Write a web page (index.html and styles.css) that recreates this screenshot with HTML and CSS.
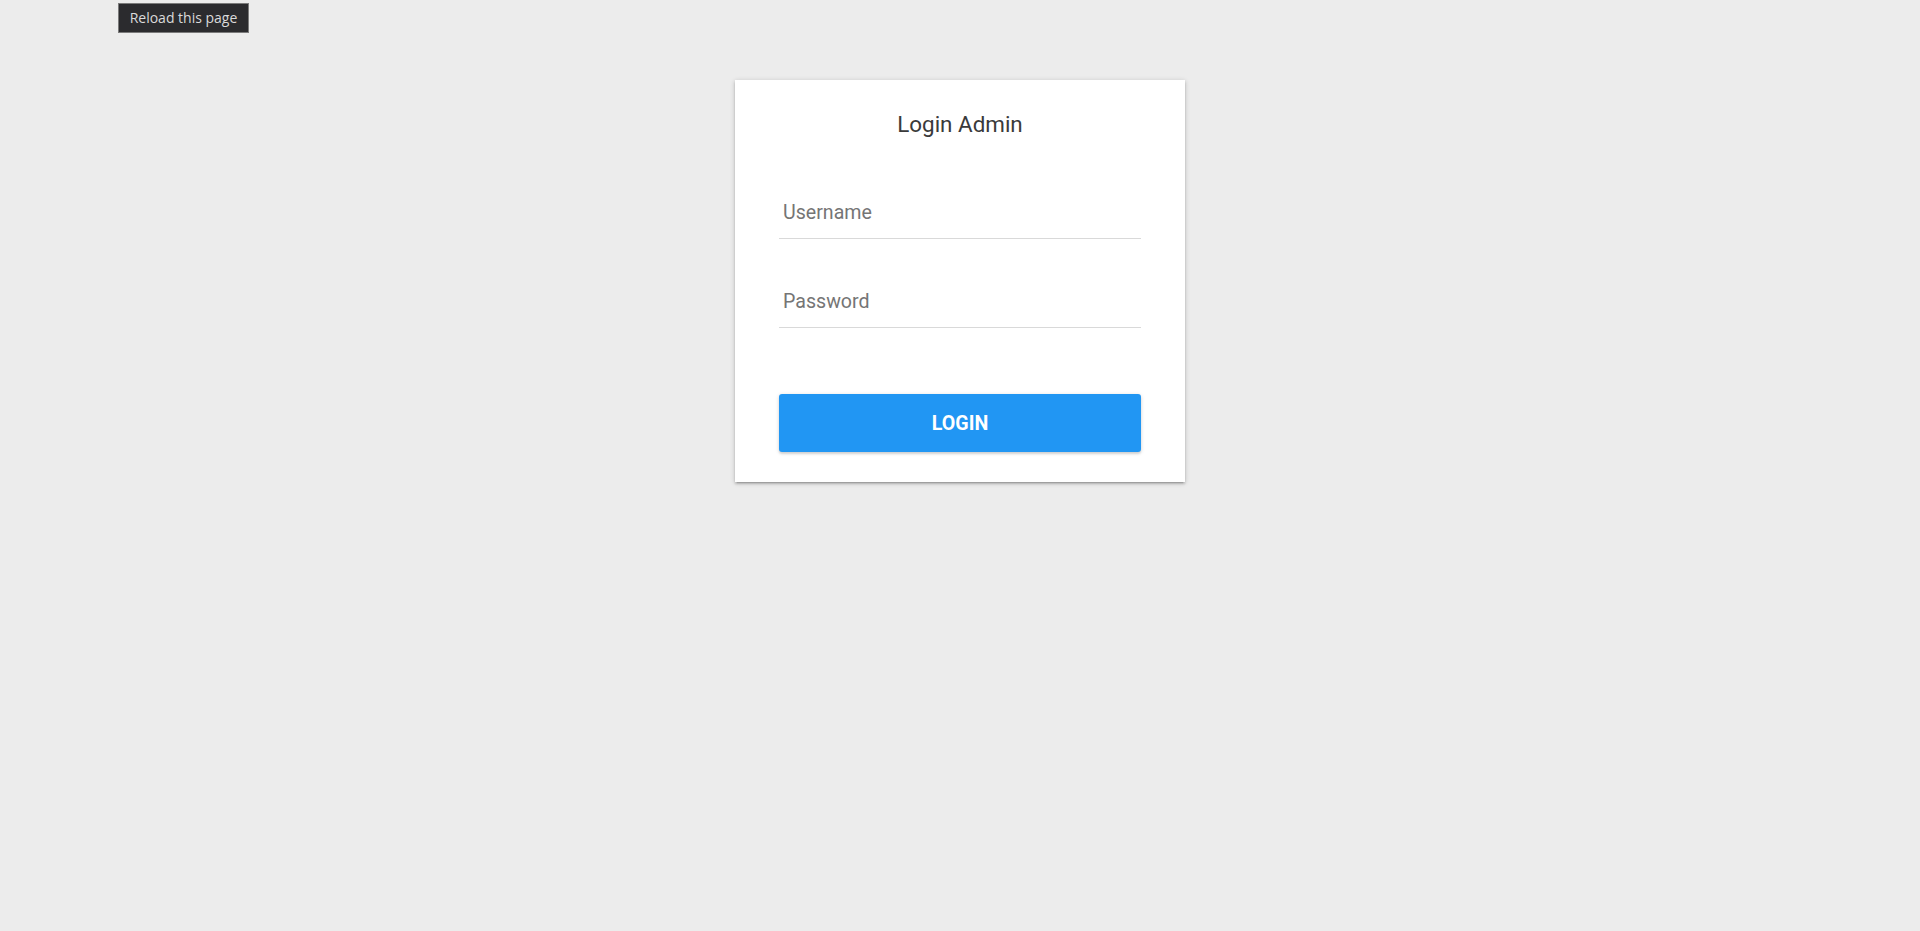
FILE: index.html
```html
<!DOCTYPE html>
<html lang="en">
<head>
<meta charset="utf-8">
<title>Login Admin</title>
<link rel="stylesheet" href="styles.css">
</head>
<body>
<div class="tooltip">Reload this page</div>
<main class="page">
  <form class="card">
    <h1 class="title">Login Admin</h1>
    <input class="field field-user" type="text" placeholder="Username">
    <input class="field field-pass" type="password" placeholder="Password">
    <button class="btn" type="button">Login</button>
  </form>
</main>
</body>
</html>
```
FILE: styles.css
```css
html, body {
  margin: 0;
  padding: 0;
}
body {
  background: #ececec;
  font-family: Roboto, "Liberation Sans", Arial, sans-serif;
  min-height: 931px;
}
.tooltip {
  position: absolute;
  left: 118px;
  top: 3px;
  box-sizing: border-box;
  width: 131px;
  height: 30px;
  line-height: 28px;
  background: #2b2b2e;
  border: 1px solid #7a7a7a;
  color: #dadada;
  font-family: "Open Sans", "Noto Sans", sans-serif;
  font-size: 14px;
  text-align: center;
}
.page {
  display: flex;
  justify-content: center;
  padding-top: 80px;
}
.card {
  box-sizing: border-box;
  width: 450px;
  padding: 31px 44px 30px;
  background: #fff;
  display: flex;
  flex-direction: column;
  box-shadow: 0 2px 2px 0 rgba(0,0,0,.14), 0 3px 1px -2px rgba(0,0,0,.12), 0 1px 5px 0 rgba(0,0,0,.2);
}
.title {
  margin: 0 0 49px;
  font-size: 22.4px;
  line-height: 26px;
  font-weight: 400;
  color: #3a3a3a;
  text-align: center;
}
.field {
  display: block;
  box-sizing: border-box;
  width: 100%;
  height: 53px;
  margin: 0;
  padding: 14px 4px;
  border: none;
  border-bottom: 1px solid #d9d9d9;
  outline: none;
  background: transparent;
  font-family: Roboto, "Liberation Sans", Arial, sans-serif;
  font-size: 19.6px;
  line-height: 24px;
  color: #333;
}
.field::placeholder {
  color: #757575;
  opacity: 1;
}
.field-pass {
  margin-top: 36px;
}
.btn {
  margin-top: 66px;
  height: 58px;
  border: none;
  border-radius: 3px;
  background: #2196f3;
  color: #fff;
  font-family: Roboto, "Liberation Sans", Arial, sans-serif;
  font-size: 19.6px;
  font-weight: 700;
  text-transform: uppercase;
  cursor: pointer;
  box-shadow: 0 2px 2px 0 rgba(0,0,0,.10), 0 1px 4px 0 rgba(0,0,0,.14);
}
```
